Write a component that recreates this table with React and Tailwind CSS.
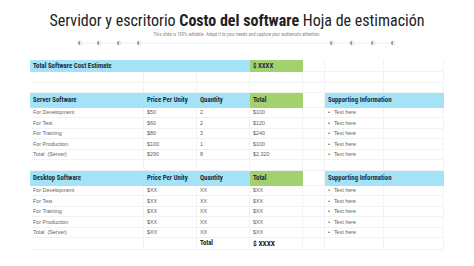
import React from "react"

const BLUE = "bg-[#a3e2f7]"
const GREEN = "bg-[#a3d16c]"

const server = [
  ["For Development", "$50", "2", "$100"],
  ["For Test", "$60", "2", "$120"],
  ["For Training", "$80", "3", "$240"],
  ["For Production", "$100", "1", "$100"],
  ["Total  (Server)", "$290", "8", "$2,320"],
]

const desktop = [
  ["For Development", "$XX", "XX", "$XX"],
  ["For Test", "$XX", "XX", "$XX"],
  ["For Training", "$XX", "XX", "$XX"],
  ["For Production", "$XX", "XX", "$XX"],
  ["Total  (Server)", "$XX", "XX", "$XX"],
]

const cols = "grid grid-cols-[114px_53px_53px_53px_22px_59px_60px]"
const cell = "border-r border-b border-[#f0f2f4] px-[3px] flex items-center"

function Row({ h, children }) {
  return <div className={`${cols} ${h}`}>{children}</div>
}

function Blank({ h = "h-[10.5px]" }) {
  return (
    <Row h={h}>
      {[0, 1, 2, 3, 4, 5, 6].map((i) => (
        <div key={i} className={cell} />
      ))}
    </Row>
  )
}

function Header({ title }) {
  const hd = "px-[3px] flex items-center font-bold text-[6.8px] text-[#1c2f3d]"
  return (
    <Row h="h-[15px]">
      <div className={`${hd} ${BLUE}`}>{title}</div>
      <div className={`${hd} ${BLUE}`}>Price Per Unity</div>
      <div className={`${hd} ${BLUE}`}>Quantity</div>
      <div className={`${hd} ${GREEN}`}>Total</div>
      <div className={cell} />
      <div className={`${hd} ${BLUE} col-span-2`}>Supporting Information</div>
    </Row>
  )
}

function DataRows({ rows }) {
  const txt = "text-[5.4px] text-[#5f5f5f] font-['Liberation_Sans',Arial,sans-serif]"
  return rows.map((r, i) => (
    <Row key={i} h="h-[10.5px]">
      {r.map((v, j) => (
        <div key={j} className={`${cell} ${txt} whitespace-pre`}>
          {v}
        </div>
      ))}
      <div className={cell} />
      <div className={`${cell} ${txt} gap-[4px]`}>
        <span>•</span>
        <span>Text here</span>
      </div>
      <div className={cell} />
    </Row>
  ))
}

function Dot({ x }) {
  return (
    <g>
      <circle cx={x} cy="3" r="2" fill="#f2f2f2" stroke="#d6d6d6" strokeWidth="0.6" />
      <path d={`M${x} 1 A2 2 0 0 0 ${x} 5 Z`} fill="#9a9a9a" />
    </g>
  )
}

export default function App() {
  return (
    <main
      className="w-[474px] h-[266px] bg-white overflow-hidden"
      style={{ fontFamily: "'Liberation Sans Narrow', 'Roboto Condensed', 'Liberation Sans', Arial, sans-serif" }}
    >
      <div className="pt-[10px] text-center">
        <h1 className="text-[16px] leading-[21px] text-[#222] font-normal">
          Servidor y escritorio <span className="font-bold">Costo del software</span> Hoja de estimación
        </h1>
        <p className="text-[4.8px] leading-[6px] text-[#8a8a8a] mt-[1px]">
          This slide is 100% editable. Adapt it to your needs and capture your audience's attention.
        </p>
        <svg width="474" height="8" className="block mt-[2px]">
          <line x1="80" y1="3" x2="393" y2="3" stroke="#e4e4e4" strokeWidth="0.6" />
          {[80, 99, 119, 139, 332, 352, 373, 393].map((x) => (
            <Dot key={x} x={x} />
          ))}
        </svg>
      </div>

      <div className="pl-[30px] mt-[12px]">
        <Row h="h-[12px]">
          <div className={`${BLUE} col-span-3 px-[3px] flex items-center font-bold text-[6.8px] text-[#1c2f3d]`}>
            Total Software Cost Estimate
          </div>
          <div className={`${GREEN} px-[3px] flex items-center text-[6.8px] font-bold text-[#1c2f3d]`}>$ XXXX</div>
          <div className={cell} />
          <div className={cell} />
          <div className={cell} />
        </Row>
        <Blank />
        <Blank h="h-[10px]" />
        <Header title="Server Software" />
        <DataRows rows={server} />
        <Blank />
        <Header title="Desktop Software" />
        <DataRows rows={desktop} />
        <Row h="h-[10px]">
          <div className={cell} />
          <div className={cell} />
          <div className={`${cell} font-bold text-[6.6px] text-[#222]`}>Total</div>
          <div className={`${cell} font-bold text-[7.4px] text-[#222]`}>$ XXXX</div>
          <div className={cell} />
          <div className={cell} />
          <div className={cell} />
        </Row>
      </div>
    </main>
  )
}
